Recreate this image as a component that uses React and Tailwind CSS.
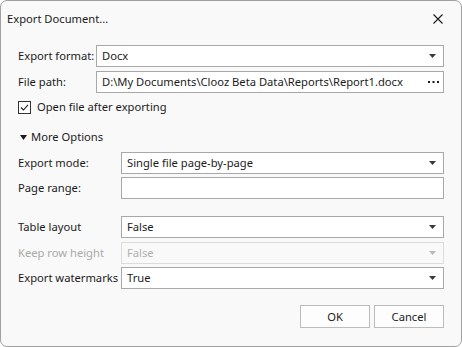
import React from 'react'

const font = { fontFamily: '"Segoe UI", "Noto Sans", sans-serif' }

const Arrow = ({ disabled }) => (
  <svg width="7" height="4" viewBox="0 0 7 4" className="shrink-0">
    <path d="M0 0h7L3.5 4z" fill={disabled ? '#b8b8b8' : '#3a3a3a'} />
  </svg>
)

const Combo = ({ value, disabled }) => (
  <div
    className={`flex-1 h-[22px] flex items-center justify-between pl-[5px] pr-[7px] border ${
      disabled ? 'border-[#dcdcdc] bg-[#f9f9f9] text-[#b0b0b0]' : 'border-[#a8a8a8] bg-white text-[#1b1b1b]'
    }`}
  >
    <span>{value}</span>
    <Arrow disabled={disabled} />
  </div>
)

const Input = ({ value, children }) => (
  <div className="flex-1 h-[22px] flex items-center justify-between pl-[5px] pr-[4px] border border-[#a8a8a8] bg-white text-[#1b1b1b]">
    <span>{value}</span>
    {children}
  </div>
)

const Row = ({ label, width, className = '', disabled, children }) => (
  <div className={`flex items-center ${className}`}>
    <div className={`${width} shrink-0 whitespace-nowrap ${disabled ? 'text-[#a9a9a9]' : 'text-[#1b1b1b]'}`}>{label}</div>
    {children}
  </div>
)

export default function App() {
  return (
    <div
      style={font}
      className="w-[462px] h-[347px] box-border border border-[#a0a0a0] rounded-[7px] bg-[#f9f9f9] text-[11.2px] leading-none whitespace-nowrap flex flex-col"
    >
      <div className="h-[35px] flex items-center justify-between pl-[6px] pr-[18px] text-[#1b1b1b]">
        <span>Export Document...</span>
        <svg width="10" height="10" viewBox="0 0 10 10">
          <path d="M0.5 0.5l9 9M9.5 0.5l-9 9" stroke="#1b1b1b" strokeWidth="1.1" />
        </svg>
      </div>

      <div className="flex flex-col pt-[9px] px-[17px]">
        <Row label="Export format:" width="w-[78px]">
          <Combo value="Docx" />
        </Row>
        <Row label="File path:" width="w-[78px]" className="mt-[4px]">
          <Input value="D:\My Documents\Clooz Beta Data\Reports\Report1.docx">
            <svg width="11" height="3" viewBox="0 0 11 3">
              <rect x="0" y="0" width="2" height="2" fill="#1b1b1b" />
              <rect x="4.5" y="0" width="2" height="2" fill="#1b1b1b" />
              <rect x="9" y="0" width="2" height="2" fill="#1b1b1b" />
            </svg>
          </Input>
        </Row>

        <div className="flex items-center h-[22px] mt-[3px] text-[#1b1b1b]">
          <div className="w-[13px] h-[13px] border border-[#333] bg-white flex items-center justify-center">
            <svg width="11" height="11" viewBox="0 0 11 11">
              <path d="M2 5.5l2.5 2.5L9 2.8" fill="none" stroke="#1b1b1b" strokeWidth="1.1" />
            </svg>
          </div>
          <span className="ml-[6px]">Open file after exporting</span>
        </div>

        <div className="flex items-center h-[22px] mt-[8px] text-[#1b1b1b]">
          <svg width="7" height="5" viewBox="0 0 7 5" className="ml-[2px]">
            <path d="M0 0h7L3.5 5z" fill="#1b1b1b" />
          </svg>
          <span className="ml-[4px]">More Options</span>
        </div>

        <Row label="Export mode:" width="w-[103px]" className="mt-[4px]">
          <Combo value="Single file page-by-page" />
        </Row>
        <Row label="Page range:" width="w-[103px]" className="mt-[3px]">
          <Input value="" />
        </Row>

        <Row label="Table layout" width="w-[103px]" className="mt-[17px]">
          <Combo value="False" />
        </Row>
        <Row label="Keep row height" width="w-[103px]" className="mt-[4px]" disabled>
          <Combo value="False" disabled />
        </Row>
        <Row label="Export watermarks" width="w-[103px]" className="mt-[3px]">
          <Combo value="True" />
        </Row>

        <div className="flex justify-end gap-[4px] mt-[16px] text-[#1b1b1b]">
          <button className="w-[70px] h-[23px] border border-[#bcbcbc] bg-[#fdfdfd] flex items-center justify-center">
            OK
          </button>
          <button className="w-[70px] h-[23px] border border-[#bcbcbc] bg-[#fdfdfd] flex items-center justify-center">
            Cancel
          </button>
        </div>
      </div>
    </div>
  )
}
